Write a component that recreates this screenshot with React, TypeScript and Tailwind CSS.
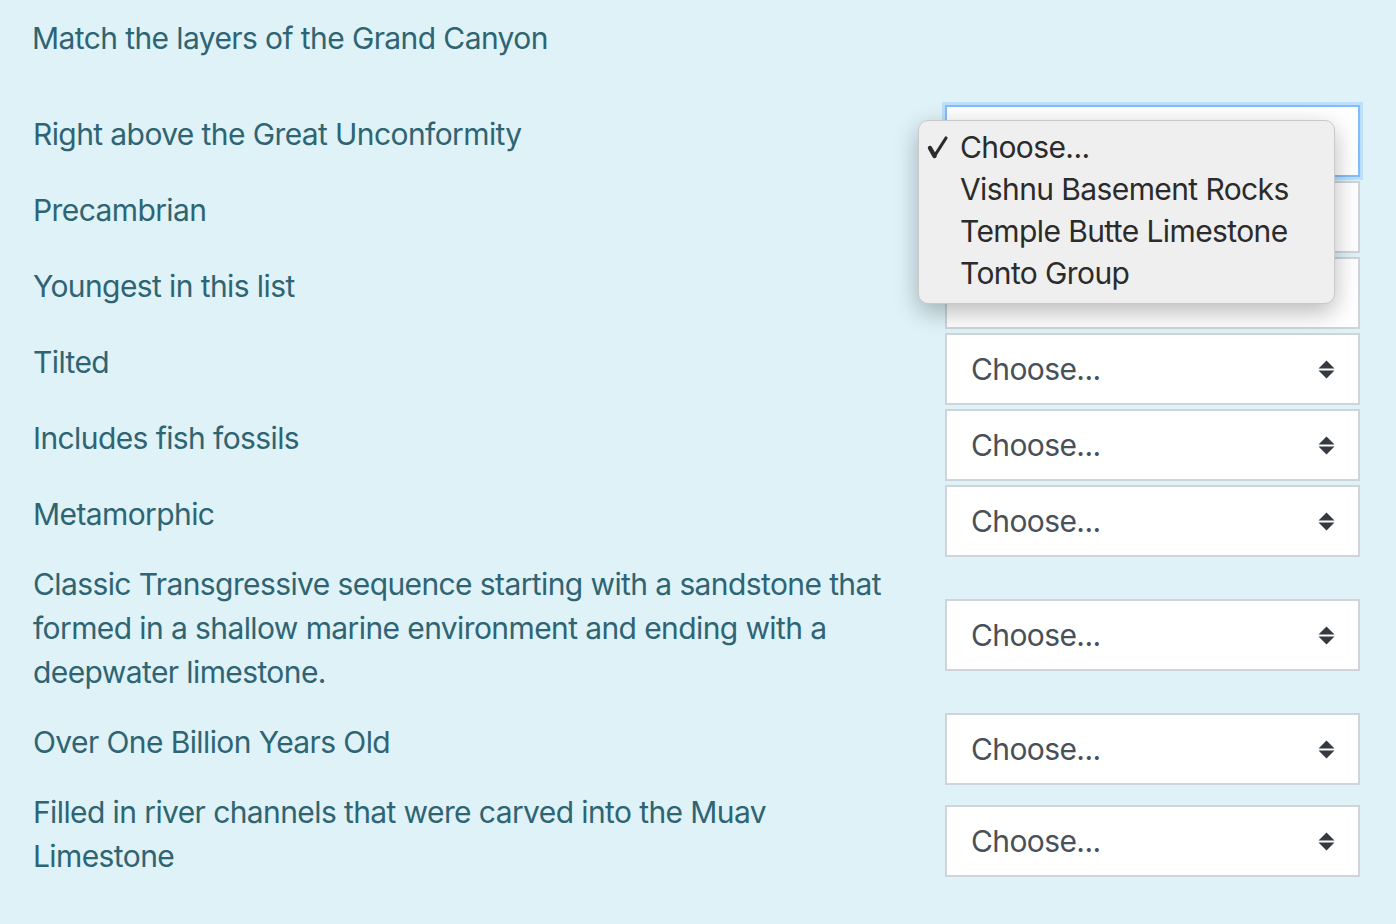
import React from 'react';

const rows: string[] = [
    'Right above the Great Unconformity',
    'Precambrian',
    'Youngest in this list',
    'Tilted',
    'Includes fish fossils',
    'Metamorphic',
    'Classic Transgressive sequence starting with a sandstone that formed in a shallow marine environment and ending with a deepwater limestone.',
    'Over One Billion Years Old',
    'Filled in river channels that were carved into the Muav Limestone',
];

const options = ['Choose...', 'Vishnu Basement Rocks', 'Temple Butte Limestone', 'Tonto Group'];

const SortArrows = () => (
    <svg width="17" height="19" viewBox="0 0 17 19" fill="#343a40">
        <path d="M8.5 0.5 L16.5 8.5 H0.5 Z" />
        <path d="M0.5 10.5 H16.5 L8.5 18.5 Z" />
    </svg>
);

const CheckMark = () => (
    <svg width="22" height="24" viewBox="0 0 22 24" fill="none" stroke="#2b2b2b" strokeLinecap="round" strokeLinejoin="round">
        <path d="M3 13 L7.5 21" strokeWidth="4.4" />
        <path d="M7.5 21 L19 3" strokeWidth="3.2" />
    </svg>
);

// the popup hides the text of the first two selects
const FakeSelect: React.FC<{ focused?: boolean; hideText?: boolean }> = ({ focused, hideText }) => (
    <div
        className={`h-[72px] w-full bg-white border-2 flex items-center justify-between pl-[24px] pr-[23px] text-[#495057] ${
            focused ? 'border-[#80bdff] shadow-[0_0_0_3px_rgba(128,189,255,0.35)]' : 'border-[#ced4da]'
        }`}
    >
        <span>{hideText ? '' : 'Choose...'}</span>
        {!hideText && <SortArrows />}
    </div>
);

export default function App() {
    return (
        <div className="relative min-h-screen bg-[#def2f8] text-[#2f6473] text-[30px] leading-[44px] font-['Inter','Liberation_Sans',sans-serif] tracking-[-0.6px]">
            <div className="pl-[33px] pr-[36px] pt-[16px]">
                <div className="mb-[43px] -ml-[1px]">Match the layers of the Grand Canyon</div>
                {rows.map((label, i) => (
                    <div key={i} className="flex items-center py-[2px]">
                        <div className="w-[868px] pt-[1px] pb-[15px]">{label}</div>
                        <div className="ml-auto w-[415px]">
                            <FakeSelect focused={i === 0} hideText={i < 2} />
                        </div>
                    </div>
                ))}
            </div>

            {/* open native popup for the first select */}
            <div className="absolute left-[918px] top-[120px] w-[417px] h-[184px] rounded-[10px] bg-[#efefef] border border-[#c9c9c9] shadow-[0_8px_24px_rgba(0,0,0,0.28)] pt-[5px] text-[#2b2b2b]">
                {options.map((opt, i) => (
                    <div key={opt} className="flex items-center h-[42px]">
                        <span className="w-[41px] pl-[8px] flex items-center">{i === 0 && <CheckMark />}</span>
                        <span>{opt}</span>
                    </div>
                ))}
            </div>
        </div>
    );
}
